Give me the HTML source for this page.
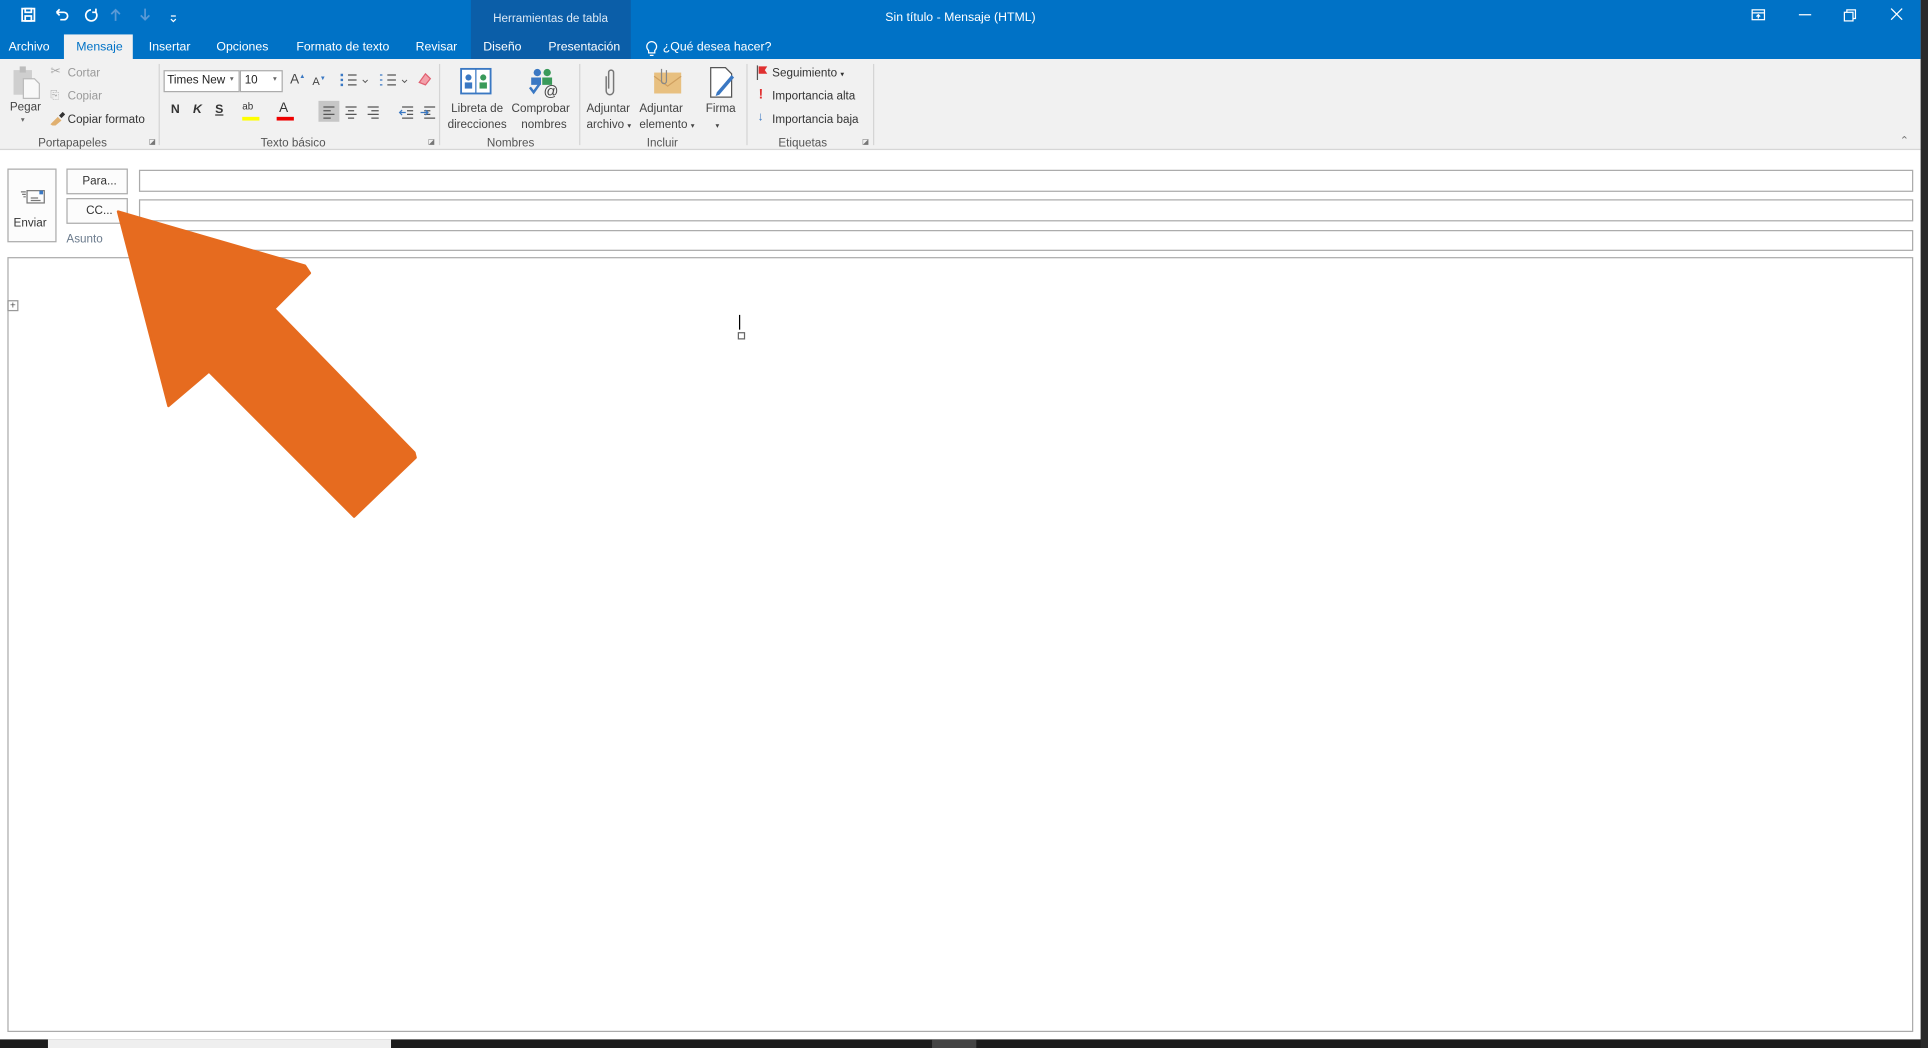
<!DOCTYPE html>
<html><head><meta charset="utf-8"><style>
*{margin:0;padding:0;box-sizing:border-box}
html,body{width:1928px;height:1048px;overflow:hidden;background:#fff}
#w{position:absolute;left:0;top:0;width:1568px;height:852px;transform:scale(1.22959,1.23005);transform-origin:0 0;font-family:"Segoe UI","Liberation Sans Narrow","Liberation Sans",sans-serif;font-size:10px;color:#333;background:#fff}
.a{position:absolute;white-space:nowrap}
.t{color:#fff;font-size:10px}
.g{color:#444;font-size:9.5px}
.lab{color:#555;font-size:9.5px}
.box{position:absolute;border:1px solid #ababab;background:#fff}
.sep{position:absolute;width:1px;background:#d5d5d5}
</style></head><body><div id="w">
<!-- title bar -->
<div class="a" style="left:0;top:0;width:1562px;height:48px;background:#0072c6"></div>
<div class="a" style="left:383px;top:0;width:130px;height:48px;background:#0b5ea8"></div>
<div class="a t" style="left:401px;top:10px;font-size:9.5px;color:#dce9f5">Herramientas de tabla</div>
<div class="a t" style="left:720px;top:9px;font-size:10px">Sin título - Mensaje (HTML)</div>
<svg class="a" style="left:10px;top:4px" width="140" height="16" viewBox="0 0 140 16" fill="none" stroke="#fff" stroke-width="1.4">
<rect x="8" y="3" width="10" height="10"/><rect x="10.5" y="3" width="5" height="3"/><rect x="10.5" y="9" width="5" height="4"/>
<path d="M36 6h6a3 3 0 010 6h-3M36 6l2.5-2.5M36 6l2.5 2.5"/>
<path d="M64 4a4.5 4.5 0 104 2M68 3v3h-3"/>
<path d="M84 13V4M80.5 7.5L84 4l3.5 3.5" stroke="#5a9ad6"/>
<path d="M108 3v9M104.5 8.5L108 12l3.5-3.5" stroke="#5a9ad6"/>
<path d="M129 9h4M129 11.5l2 2 2-2" stroke-width="1"/>
</svg>
<svg class="a" style="left:1420px;top:4px" width="135" height="16" viewBox="0 0 135 16" fill="none" stroke="#fff" stroke-width="1">
<rect x="5" y="4" width="10" height="8"/><path d="M5 6.5h10M10 11V8M8.5 9.5L10 8l1.5 1.5"/>
<path d="M43 8h10"/>
<rect x="80" y="6" width="7" height="7"/><path d="M82 6V4h7v7h-2"/>
<path d="M118 3l9 9M127 3l-9 9"/>
</svg>
<!-- tabs -->
<div class="a" style="left:52px;top:28px;width:56px;height:20px;background:#f1f1f1"></div>
<div class="a t" style="left:7px;top:33px">Archivo</div>
<div class="a" style="left:62px;top:33px;color:#0072c6">Mensaje</div>
<div class="a t" style="left:121px;top:33px">Insertar</div>
<div class="a t" style="left:176px;top:33px">Opciones</div>
<div class="a t" style="left:241px;top:33px">Formato de texto</div>
<div class="a t" style="left:338px;top:33px">Revisar</div>
<div class="a t" style="left:393px;top:33px">Diseño</div>
<div class="a t" style="left:446px;top:33px">Presentación</div>
<svg class="a" style="left:524px;top:32px" width="12" height="14" viewBox="0 0 12 14" fill="none" stroke="#fff"><path d="M3.5 9a4 4 0 115 0v2h-5zM4.5 13h3"/></svg>
<div class="a t" style="left:539px;top:33px">¿Qué desea hacer?</div>
<!-- ribbon -->
<div class="a" style="left:0;top:48px;width:1562px;height:74px;background:#f1f1f1;border-bottom:1px solid #d6d6d6"></div>
<svg class="a" style="left:9px;top:53px" width="24" height="28" viewBox="0 0 24 28"><rect x="2" y="4" width="15" height="20" fill="#cfcfcf"/><rect x="7" y="1" width="5" height="5" fill="#bdbdbd"/><path d="M10 11h9l4 4v12H10z" fill="#f8f8f8" stroke="#bbb"/></svg>
<div class="a g" style="left:8px;top:82px">Pegar</div>
<div class="a" style="left:17px;top:94px;font-size:6px;color:#666">▾</div>
<div class="a" style="left:41px;top:53px;color:#a8a8a8;font-size:10px">✂</div>
<div class="a lab" style="left:55px;top:54px;color:#9a9a9a">Cortar</div>
<div class="a" style="left:41px;top:72px;color:#a8a8a8;font-size:9px">⎘</div>
<div class="a lab" style="left:55px;top:73px;color:#9a9a9a">Copiar</div>
<svg class="a" style="left:40px;top:91px" width="13" height="11"><path d="M1 10l6-6 3 3-6 5z" fill="#e0b070"/><path d="M8 3l3-3 2 2-3 3z" fill="#333"/></svg>
<div class="a lab" style="left:55px;top:92px;color:#333">Copiar formato</div>
<div class="a lab" style="left:31px;top:111px">Portapapeles</div>
<div class="a" style="left:121px;top:112px;font-size:6px;color:#777">◪</div>
<div class="sep" style="left:129px;top:52px;height:66px"></div>
<div class="box" style="left:133px;top:57px;width:62px;height:18px"></div>
<div class="a" style="left:136px;top:60px;font-size:9.5px;color:#222">Times New</div>
<div class="a" style="left:187px;top:61px;font-size:6px;color:#666">▾</div>
<div class="box" style="left:195px;top:57px;width:35px;height:18px"></div>
<div class="a" style="left:199px;top:60px;font-size:9.5px;color:#222">10</div>
<div class="a" style="left:222px;top:61px;font-size:6px;color:#666">▾</div>
<div class="a" style="left:236px;top:59px;font-size:11px;color:#444">A<sup style="font-size:5px;color:#3a78c3">▲</sup></div>
<div class="a" style="left:254px;top:61px;font-size:9px;color:#444">A<sup style="font-size:5px;color:#3a78c3">▼</sup></div>
<svg class="a" style="left:275px;top:58px" width="80" height="14" fill="none" stroke="#555"><path d="M8 3h7M8 7h7M8 11h7"/><path d="M2 3h2M2 7h2M2 11h2" stroke="#3a78c3" stroke-width="2"/><path d="M40 3h7M40 7h7M40 11h7"/><path d="M34 3h2M34 7h2M34 11h2" stroke="#3a78c3"/><path d="M20 7l2 2 2-2M52 7l2 2 2-2" stroke-width=".8"/><path d="M66 9l5-7 4 4-4 5z" stroke="#e06070" fill="#f3a0aa"/></svg>
<div class="a" style="left:139px;top:84px;font-weight:bold;font-size:10px;color:#333">N</div>
<div class="a" style="left:157px;top:84px;font-weight:bold;font-style:italic;font-size:10px;color:#333">K</div>
<div class="a" style="left:175px;top:84px;font-weight:bold;font-size:10px;color:#333;text-decoration:underline">S</div>
<div class="a" style="left:197px;top:82px;font-size:8px;color:#333">ab</div>
<div class="a" style="left:197px;top:95px;width:14px;height:3px;background:#ff0"></div>
<div class="a" style="left:227px;top:82px;font-size:11px;color:#333">A</div>
<div class="a" style="left:225px;top:95px;width:14px;height:3px;background:#e00"></div>
<div class="a" style="left:259px;top:82px;width:17px;height:17px;background:#c6c6c6"></div>
<svg class="a" style="left:259px;top:84px" width="95" height="14" fill="none" stroke="#555"><path d="M4 3h9M4 6h6M4 9h9M4 12h6M22 3h9M24 6h5M22 9h9M24 12h5M40 3h9M43 6h6M40 9h9M43 12h6M68 3h9M72 6h5M72 9h5M68 12h9M86 3h9M86 6h5M86 9h5M86 12h9"/><path d="M71 7.5h-5M68 5.5l-2 2 2 2M83 7.5h6M87 5.5l2 2-2 2" stroke="#3a78c3"/></svg>
<div class="a lab" style="left:212px;top:111px">Texto básico</div>
<div class="a" style="left:348px;top:112px;font-size:6px;color:#777">◪</div>
<div class="sep" style="left:357px;top:52px;height:66px"></div>
<svg class="a" style="left:374px;top:54px" width="26" height="24"><rect x="1" y="2" width="24" height="20" fill="#fff" stroke="#3a78c3" stroke-width="1.5"/><path d="M13 2v20" stroke="#3a78c3"/><circle cx="7" cy="9" r="2.5" fill="#3a78c3"/><circle cx="19" cy="9" r="2.5" fill="#3a9a5a"/><rect x="4" y="13" width="6" height="5" fill="#3a78c3"/><rect x="16" y="13" width="6" height="5" fill="#3a9a5a"/></svg>
<svg class="a" style="left:428px;top:54px" width="28" height="26"><circle cx="9" cy="5" r="3" fill="#3a78c3"/><circle cx="17" cy="5" r="3" fill="#3a9a5a"/><rect x="4" y="9" width="8" height="6" fill="#3a78c3"/><rect x="13" y="9" width="8" height="6" fill="#3a9a5a"/><path d="M3 17l3 4 5-7" stroke="#3a78c3" stroke-width="2" fill="none"/><text x="14" y="24" font-size="12" fill="#444" font-family="Liberation Sans">@</text></svg>
<div class="a g" style="left:364px;top:82px;text-align:center;line-height:13px">Libreta de<br>direcciones</div>
<div class="a g" style="left:416px;top:82px;text-align:center;line-height:13px">Comprobar<br>&nbsp;&nbsp;nombres</div>
<div class="a lab" style="left:396px;top:111px">Nombres</div>
<div class="sep" style="left:471px;top:52px;height:66px"></div>
<svg class="a" style="left:489px;top:54px" width="14" height="26" fill="none" stroke="#777" stroke-width="1.2"><path d="M4 8v12a3 3 0 006 0V5a2 2 0 00-4 0v13"/></svg>
<svg class="a" style="left:530px;top:54px" width="26" height="24"><rect x="2" y="5" width="22" height="17" fill="#e8c080"/><path d="M2 8l11 8 11-8" fill="none" stroke="#d0a060"/><path d="M8 2v10a2 2 0 004 0V3" fill="none" stroke="#888"/></svg>
<svg class="a" style="left:575px;top:53px" width="24" height="28"><path d="M3 2h12l5 5v19H3z" fill="#fff" stroke="#555"/><path d="M8 22l12-14 2 2-12 14-3 1z" fill="#3a78c3"/></svg>
<div class="a g" style="left:477px;top:82px;line-height:13px">Adjuntar<br>archivo <span style="font-size:6px">▾</span></div>
<div class="a g" style="left:520px;top:82px;line-height:13px">Adjuntar<br>elemento <span style="font-size:6px">▾</span></div>
<div class="a g" style="left:574px;top:82px;line-height:13px">Firma<br>&nbsp;&nbsp;&nbsp;<span style="font-size:6px">▾</span></div>
<div class="a lab" style="left:526px;top:111px">Incluir</div>
<div class="sep" style="left:607px;top:52px;height:66px"></div>
<svg class="a" style="left:615px;top:53px" width="10" height="12"><path d="M1 0v12" stroke="#555"/><path d="M2 1h7l-2 3 2 3H2z" fill="#e03030"/></svg>
<div class="a lab" style="left:628px;top:54px;color:#333">Seguimiento <span style="font-size:6px">▾</span></div>
<div class="a" style="left:617px;top:71px;color:#e03030;font-weight:bold;font-size:11px">!</div>
<div class="a lab" style="left:628px;top:73px;color:#333">Importancia alta</div>
<div class="a" style="left:616px;top:90px;color:#3a78c3;font-size:10px;font-weight:bold">↓</div>
<div class="a lab" style="left:628px;top:92px;color:#333">Importancia baja</div>
<div class="a lab" style="left:633px;top:111px">Etiquetas</div>
<div class="a" style="left:701px;top:112px;font-size:6px;color:#777">◪</div>
<div class="sep" style="left:710px;top:52px;height:66px"></div>
<div class="a" style="left:1545px;top:109px;font-size:9px;color:#777">⌃</div>
<!-- header fields -->
<div class="box" style="left:6px;top:137px;width:40px;height:60px;background:#fcfcfc"></div>
<svg class="a" style="left:16px;top:153px" width="22" height="14" fill="none" stroke="#777"><rect x="6" y="2" width="14" height="10"/><path d="M9 8h6M9 10h8M1 3h4M2 5h3M3 7h2"/><rect x="16" y="2" width="3" height="3" fill="#3a78c3" stroke="none"/></svg>
<div class="a" style="left:11px;top:176px;font-size:9.5px;color:#333">Enviar</div>
<div class="box" style="left:54px;top:137px;width:50px;height:21px;background:#fcfcfc"></div>
<div class="a" style="left:67px;top:142px;font-size:9.5px;color:#333">Para...</div>
<div class="box" style="left:54px;top:161px;width:50px;height:21px;background:#fcfcfc"></div>
<div class="a" style="left:70px;top:166px;font-size:9.5px;color:#333">CC...</div>
<div class="a" style="left:54px;top:189px;font-size:9.5px;color:#6a7a8c">Asunto</div>
<div class="box" style="left:113px;top:138px;width:1443px;height:18px"></div>
<div class="box" style="left:113px;top:162px;width:1443px;height:18px"></div>
<div class="box" style="left:113px;top:187px;width:1443px;height:17px"></div>
<div class="box" style="left:6px;top:209px;width:1550px;height:630px"></div>
<div class="a" style="left:6px;top:244px;width:9px;height:9px;border:1px solid #999;font-size:8px;line-height:7px;text-align:center;color:#444">+</div>
<div class="a" style="left:601px;top:256px;width:1px;height:12px;background:#000"></div>
<div class="a" style="left:600px;top:270px;width:6px;height:6px;border:1px solid #666"></div>
<!-- arrow -->
<svg class="a" style="left:0;top:0" width="1568" height="852"><polygon points="96,172 248,216 252,222 223,251 337,368 338,372 288,420 170,302 137,330" fill="#e66b1f" stroke="#e66b1f" stroke-width="2" stroke-linejoin="round"/></svg>
<!-- taskbar / right strip -->
<div class="a" style="left:0;top:845px;width:1568px;height:7px;background:#1c1c1c"></div>
<div class="a" style="left:39px;top:845px;width:279px;height:7px;background:#efefef"></div>
<div class="a" style="left:758px;top:845px;width:36px;height:7px;background:#444"></div>
<div class="a" style="left:1562px;top:0;width:6px;height:852px;background:#2a2a2a"></div>
</div></body></html>
